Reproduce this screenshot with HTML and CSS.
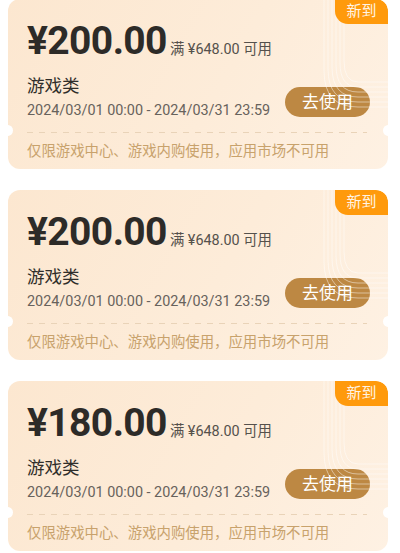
FILE: index.html
```html
<!DOCTYPE html>
<html lang="zh-CN">
<head>
<meta charset="utf-8">
<link rel="stylesheet" href="styles.css">
</head>
<body>
<div class="list">
  <div class="card">
    <svg class="deco" width="66" height="112" viewBox="0 0 66 112" fill="none" stroke="#ffffff" stroke-opacity="0.6" stroke-width="0.8">
      <path d="M2 0 V72 Q2 108 36 108 H66"/>
      <path d="M6 0 V70 Q6 103 36 103 H66"/>
      <path d="M10 0 V68 Q10 98 36 98 H66"/>
      <path d="M14 0 V66 Q14 93 36 93 H66"/>
      <path d="M18 0 V64 Q18 88 36 88 H66"/>
      <path d="M22 0 V62 Q22 83 36 83 H66"/>
    </svg>
    <div class="badge">新到</div>
    <div class="top">
      <div class="amount-row">
        <span class="amount">¥200.00</span>
        <span class="cond">满 ¥648.00 可用</span>
      </div>
      <div class="info-row">
        <div class="info">
          <div class="title">游戏类</div>
          <div class="date">2024/03/01 00:00 - 2024/03/31 23:59</div>
        </div>
        <button class="use">去使用</button>
      </div>
    </div>
    <div class="divider"></div>
    <div class="note">仅限游戏中心、游戏内购使用，应用市场不可用</div>
  </div>

  <div class="card">
    <svg class="deco" width="66" height="112" viewBox="0 0 66 112" fill="none" stroke="#ffffff" stroke-opacity="0.6" stroke-width="0.8">
      <path d="M2 0 V72 Q2 108 36 108 H66"/>
      <path d="M6 0 V70 Q6 103 36 103 H66"/>
      <path d="M10 0 V68 Q10 98 36 98 H66"/>
      <path d="M14 0 V66 Q14 93 36 93 H66"/>
      <path d="M18 0 V64 Q18 88 36 88 H66"/>
      <path d="M22 0 V62 Q22 83 36 83 H66"/>
    </svg>
    <div class="badge">新到</div>
    <div class="top">
      <div class="amount-row">
        <span class="amount">¥200.00</span>
        <span class="cond">满 ¥648.00 可用</span>
      </div>
      <div class="info-row">
        <div class="info">
          <div class="title">游戏类</div>
          <div class="date">2024/03/01 00:00 - 2024/03/31 23:59</div>
        </div>
        <button class="use">去使用</button>
      </div>
    </div>
    <div class="divider"></div>
    <div class="note">仅限游戏中心、游戏内购使用，应用市场不可用</div>
  </div>

  <div class="card">
    <svg class="deco" width="66" height="112" viewBox="0 0 66 112" fill="none" stroke="#ffffff" stroke-opacity="0.6" stroke-width="0.8">
      <path d="M2 0 V72 Q2 108 36 108 H66"/>
      <path d="M6 0 V70 Q6 103 36 103 H66"/>
      <path d="M10 0 V68 Q10 98 36 98 H66"/>
      <path d="M14 0 V66 Q14 93 36 93 H66"/>
      <path d="M18 0 V64 Q18 88 36 88 H66"/>
      <path d="M22 0 V62 Q22 83 36 83 H66"/>
    </svg>
    <div class="badge">新到</div>
    <div class="top">
      <div class="amount-row">
        <span class="amount">¥180.00</span>
        <span class="cond">满 ¥648.00 可用</span>
      </div>
      <div class="info-row">
        <div class="info">
          <div class="title">游戏类</div>
          <div class="date">2024/03/01 00:00 - 2024/03/31 23:59</div>
        </div>
        <button class="use">去使用</button>
      </div>
    </div>
    <div class="divider"></div>
    <div class="note">仅限游戏中心、游戏内购使用，应用市场不可用</div>
  </div>
</div>
</body>
</html>
```

FILE: styles.css
```css
* { box-sizing: border-box; }
html, body {
  margin: 0;
  padding: 0;
  background: #ffffff;
  font-family: Roboto, "Noto Sans CJK SC", sans-serif;
  overflow: hidden;
}
.list {
  display: flex;
  flex-direction: column;
  gap: 21px;
  padding: 0 12px 0 8px;
  margin-top: -1px;
}
.card {
  position: relative;
  height: 170px;
  border-radius: 12px;
  background: linear-gradient(120deg, #fce7d0 0%, #fdecd9 55%, #fef1e3 100%);
  overflow: hidden;
}
.card::before,
.card::after {
  content: "";
  position: absolute;
  top: 126px;
  width: 11px;
  height: 11px;
  border-radius: 50%;
  background: #ffffff;
}
.card::before { left: -6px; }
.card::after { right: -6px; }
.deco {
  position: absolute;
  top: 0;
  right: 0;
}
.badge {
  position: absolute;
  top: 0;
  right: 0;
  width: 53px;
  height: 25px;
  background: #ff9a0c;
  color: #fff4e4;
  font-size: 15px;
  line-height: 25px;
  text-align: center;
  border-radius: 0 12px 0 13px;
}
.top {
  padding: 20px 18px 0 19px;
}
.amount-row {
  display: flex;
  align-items: baseline;
  gap: 3px;
}
.amount {
  font-size: 39px;
  font-weight: 700;
  line-height: 44px;
  color: #2d2b28;
  letter-spacing: -0.6px;
}
.cond {
  font-size: 14.4px;
  color: #55514c;
}
.info-row {
  display: flex;
  align-items: flex-end;
  justify-content: space-between;
  margin-top: 12px;
}
.title {
  font-size: 17.5px;
  line-height: 23px;
  color: #2f2d2a;
}
.date {
  margin-top: 3px;
  font-size: 14.4px;
  line-height: 20px;
  color: #67625c;
}
.use {
  width: 85px;
  height: 30px;
  margin-bottom: 4px;
  border: none;
  border-radius: 15px;
  background: #bd8843;
  color: #ffffff;
  font-family: Roboto, "Noto Sans CJK SC", sans-serif;
  font-size: 17px;
  line-height: 30px;
  padding: 0;
}
.divider {
  margin: 11px 21px 0 19px;
  height: 1px;
  background: repeating-linear-gradient(90deg, #e9d3b8 0 6px, transparent 6px 12px);
}
.note {
  padding: 8px 0 0 19px;
  font-size: 14.4px;
  line-height: 22px;
  color: #c8a26c;
}
```
